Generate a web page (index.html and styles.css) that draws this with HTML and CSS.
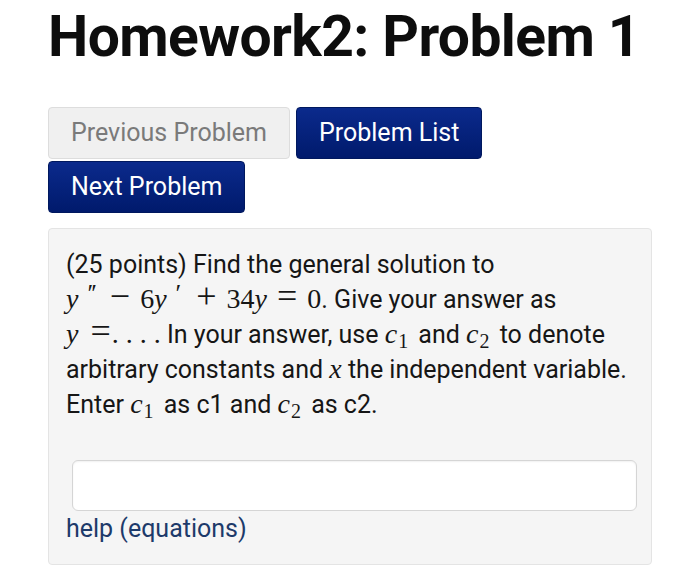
FILE: index.html
```html
<!DOCTYPE html>
<html lang="en">
<head>
  <meta charset="UTF-8">
  <meta name="viewport" content="width=device-width, initial-scale=1.0">
  <title>Homework2: Problem 1</title>
  <link rel="stylesheet" href="styles.css">
</head>
<body>
  <div class="page">
    <h1 class="title">Homework2: Problem 1</h1>

    <div class="nav-buttons">
      <a class="button disabled">Previous Problem</a>
      <a class="button primary">Problem List</a>
      <a class="button primary">Next Problem</a>
    </div>

    <div class="problem">
      <p class="problem-text">
        (25 points) Find the general solution to
        <span class="math"><i>y</i><span class="prime dbl">′′</span><span class="op">−</span>6<i>y</i><span class="prime">′</span><span class="op">+</span>34<i>y</i><span class="op">=</span>0</span>. Give your answer as
        <span class="math"><i>y</i><span class="op rel">=</span><span class="dots">...</span>.</span> In your answer, use
        <span class="math"><i>c</i><sub>1</sub></span> and <span class="math"><i>c</i><sub>2</sub></span> to denote
        arbitrary constants and <span class="math"><i>x</i></span> the independent variable.
        Enter <span class="math"><i>c</i><sub>1</sub></span> as c1 and <span class="math"><i>c</i><sub>2</sub></span> as c2.
      </p>

      <input class="answer" type="text">
      <a class="help-link">help (equations)</a>
    </div>
  </div>
</body>
</html>
```

FILE: styles.css
```css
:root {
  --text: #161616;
  --muted: #7a7a7a;
  --navy: #0b2a8c;
  --navy-dark: #001a6c;
  --link: #1d3a6a;
  --panel-bg: #f5f5f5;
  --panel-border: #e4e4e4;
  --font-sans: Roboto, "Liberation Sans", Arial, sans-serif;
  --font-math: "Liberation Serif", "DejaVu Serif", serif;
}

* {
  box-sizing: border-box;
}

body {
  margin: 0;
  background: #ffffff;
  color: var(--text);
  font-family: var(--font-sans);
  -webkit-font-smoothing: antialiased;
}

.page {
  padding: 0 48px;
}

.title {
  margin: 2px 0 0;
  font-size: 57px;
  line-height: 70px;
  font-weight: 700;
  color: #0d0d0d;
  letter-spacing: -0.6px;
  white-space: nowrap;
}

.nav-buttons {
  display: flex;
  flex-wrap: wrap;
  gap: 2px 6px;
  width: 460px;
  margin-top: 35px;
}

.button {
  display: inline-block;
  padding: 11px 22px;
  font-size: 25px;
  line-height: 28px;
  border-radius: 4px;
  border: 1px solid transparent;
  text-decoration: none;
}

.button.disabled {
  background: #f0f0f0;
  border-color: #dddddd;
  color: var(--muted);
}

.button.primary {
  background: linear-gradient(to bottom, var(--navy), var(--navy-dark));
  border-color: #00185e;
  color: #ffffff;
}

.problem {
  margin-top: 15px;
  width: 604px;
  padding: 18px 14px 18px 17px;
  background: var(--panel-bg);
  border: 1px solid var(--panel-border);
  border-radius: 4px;
}

.problem-text {
  margin: 0;
  font-size: 25px;
  line-height: 35px;
}

.math {
  font-family: var(--font-math);
  font-size: 28px;
  line-height: 0;
  white-space: nowrap;
}

.math i {
  font-style: italic;
}

.math sub {
  font-style: normal;
  font-size: 20px;
  vertical-align: -5px;
  margin-left: 1px;
  margin-right: 4px;
}

.prime {
  display: inline-block;
  font-size: 26px;
  vertical-align: 6px;
  margin-left: 9px;
}

.prime.dbl {
  margin-left: 9px;
  letter-spacing: -2px;
}

.op {
  font-size: 36px;
  margin: 0 10px;
}

.prime + .op {
  margin-left: 15px;
}

.op.rel {
  margin: 0 1px 0 12px;
}

.dots {
  letter-spacing: 7px;
}

.answer {
  display: block;
  width: 565px;
  height: 51px;
  margin: 38px 0 0 6px;
  background: #ffffff;
  border: 1px solid #d5d5d5;
  border-radius: 6px;
  box-shadow: inset 0 1px 2px rgba(0, 0, 0, 0.06);
}

.help-link {
  display: block;
  font-size: 25px;
  line-height: 35px;
  color: var(--link);
  text-decoration: none;
}
```
